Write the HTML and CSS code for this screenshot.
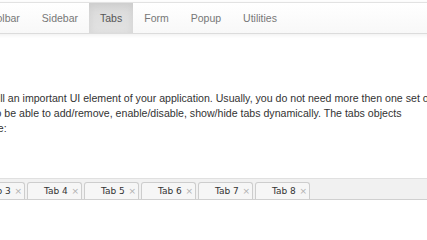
FILE: index.html
```html
<!DOCTYPE html>
<html lang="en">
<head>
    <meta charset="UTF-8">
    <meta name="viewport" content="width=device-width, initial-scale=1.0">
    <title>Tabs</title>
    <link rel="stylesheet" href="styles.css">
</head>
<body>
    <div class="page">
        <nav class="navbar">
            <ul class="nav">
                <li><a href="#">Layout</a></li>
                <li><a href="#">Grid</a></li>
                <li><a href="#">Toolbar</a></li>
                <li><a href="#">Sidebar</a></li>
                <li class="active"><a href="#">Tabs</a></li>
                <li><a href="#">Form</a></li>
                <li><a href="#">Popup</a></li>
                <li><a href="#">Utilities</a></li>
            </ul>
        </nav>

        <div class="content">
            <p class="intro">
                Tabs are still an important UI element of your application. Usually, you do not need more then one set of tabs, but<br>
                you need to be able to add/remove, enable/disable, show/hide tabs dynamically. The tabs objects<br>
                are versatile:
            </p>
        </div>

        <div class="tabs">
            <div class="tab">Tab 1 <span class="close">&times;</span></div>
            <div class="tab">Tab 2 <span class="close">&times;</span></div>
            <div class="tab">Tab 3 <span class="close">&times;</span></div>
            <div class="tab">Tab 4 <span class="close">&times;</span></div>
            <div class="tab">Tab 5 <span class="close">&times;</span></div>
            <div class="tab">Tab 6 <span class="close">&times;</span></div>
            <div class="tab">Tab 7 <span class="close">&times;</span></div>
            <div class="tab">Tab 8 <span class="close">&times;</span></div>
        </div>
    </div>
</body>
</html>
```

FILE: styles.css
```css
body {
    margin: 0;
    background: #fff;
    font-family: "Liberation Sans", Arial, sans-serif;
    color: #333;
    overflow: hidden;
}

.page {
    margin-left: -150px;
    width: 640px;
    padding-top: 2px;
}

.navbar {
    background: linear-gradient(to bottom, #fff 0, #f8f8f8 100%);
    border-top: 1px solid #e2e2e2;
    border-bottom: 1px solid #dcdcdc;
    box-shadow: 0 1px 4px rgba(0, 0, 0, 0.07);
}

.nav {
    display: flex;
    list-style: none;
    margin: 0;
    padding: 0 0 0 29px;
}

.nav a {
    display: block;
    padding: 0 11px;
    line-height: 30px;
    font-size: 10.5px;
    color: #777;
    text-decoration: none;
}

.nav .active a {
    color: #555;
    background: linear-gradient(to bottom, #dbdbdb 0, #e2e2e2 100%);
    box-shadow: inset 0 3px 9px rgba(0, 0, 0, 0.075);
}

.content {
    padding: 57px 0 0 96px;
}

.intro {
    margin: 0;
    font-size: 10.6px;
    line-height: 15px;
}

.tabs {
    display: flex;
    gap: 2px;
    margin-top: 42px;
    padding: 3px 0 0 6px;
    background: #f1f1f1;
    border-top: 1px solid #e0e0e0;
    border-bottom: 1px solid #d0d0d0;
}

.tab {
    display: flex;
    align-items: center;
    width: 35px;
    padding: 0 2px 0 16px;
    height: 16px;
    font-family: "DejaVu Sans", Verdana, sans-serif;
    font-size: 9px;
    color: #333;
    background: #f6f6f6;
    border: 1px solid #cdcdcd;
    border-bottom: none;
    border-radius: 3px 3px 0 0;
    white-space: nowrap;
}

.close {
    margin-left: auto;
    font-size: 9px;
    color: #b0b0b0;
}
```
